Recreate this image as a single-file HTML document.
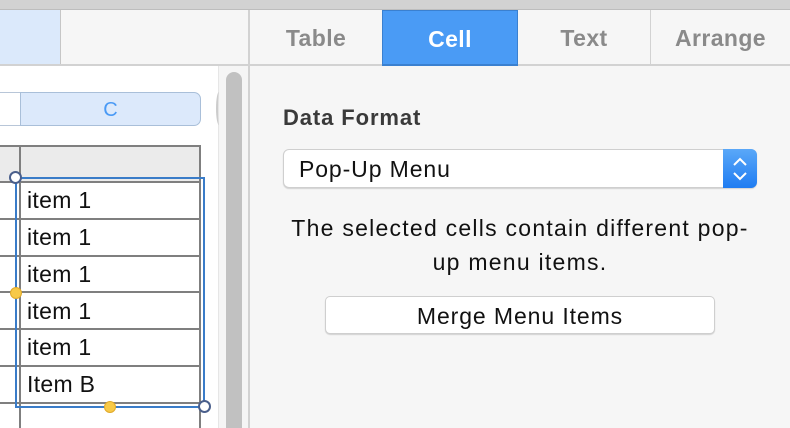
<!DOCTYPE html>
<html><head><style>
*{margin:0;padding:0;box-sizing:border-box}
body{width:790px;height:428px;overflow:hidden;position:relative;background:#fff;font-family:"Liberation Sans",Helvetica,Arial,sans-serif}
.a{position:absolute}
.tab{position:absolute;top:10px;height:54px;line-height:56px;text-align:center;font-size:23px;letter-spacing:0.4px;font-weight:bold;color:#8a8a8a}
.row{position:absolute;left:20px;width:180px;font-size:23px;letter-spacing:0.3px;color:#111;padding-left:7px}
</style></head><body>
<div class="a" style="left:0;top:0;width:790px;height:9px;background:#d2d2d2"></div>
<div class="a" style="left:0;top:9px;width:790px;height:1px;background:#bdbdbd"></div>
<div class="a" style="left:0;top:10px;width:249px;height:54px;background:#f6f6f6"></div>
<div class="a" style="left:0;top:10px;width:61px;height:54px;background:#dbe9fb;border-right:1px solid #c6c6c6"></div>
<div class="a" style="left:0;top:64px;width:790px;height:2px;background:#d2d2d2"></div>
<div class="a" style="left:248px;top:10px;width:2px;height:418px;background:#d2d2d2"></div>
<div class="a" style="left:250px;top:66px;width:540px;height:362px;background:#f6f6f6"></div>
<div class="a" style="left:250px;top:10px;width:540px;height:54px;background:#f6f6f6"></div>
<div class="tab" style="left:250px;width:132px">Table</div>
<div class="tab" style="left:382px;width:136px;background:#4a9bf5;color:#fff;border:1px solid #3a80d0;border-bottom:2px solid #3a80d0;height:56px">Cell</div>
<div class="tab" style="left:518px;width:133px;border-right:1px solid #d2d2d2">Text</div>
<div class="tab" style="left:651px;width:139px">Arrange</div>
<div class="a" style="left:283px;top:105px;font-size:22px;letter-spacing:0.9px;font-weight:bold;color:#3a3a3a">Data Format</div>
<div class="a" style="left:283px;top:149px;width:474px;height:39px;background:#fff;border:1px solid #cfcfcf;border-radius:6px;box-shadow:0 1px 1px rgba(0,0,0,.15)"></div>
<div class="a" style="left:299px;top:156px;font-size:23px;letter-spacing:0.9px;color:#111">Pop-Up Menu</div>
<div class="a" style="left:723px;top:149px;width:34px;height:39px;background:linear-gradient(#5aa8f8,#1f7cf2);border-radius:0 6px 6px 0"></div>
<svg class="a" style="left:730px;top:154px" width="20" height="30"><path d="M4 11 L10 5 L16 11 M4 19 L10 25 L16 19" stroke="#fff" stroke-width="2" fill="none"/></svg>
<div class="a" style="left:250px;top:211px;width:540px;text-align:center;font-size:23px;letter-spacing:1.25px;line-height:34px;color:#111">The selected cells contain different pop-<br>up menu items.</div>
<div class="a" style="left:325px;top:296px;width:390px;height:38px;background:#fff;border:1px solid #cfcfcf;border-radius:5px;box-shadow:0 1px 1px rgba(0,0,0,.15);text-align:center;line-height:38px;font-size:23px;letter-spacing:0.9px;color:#111">Merge Menu Items</div>
<div class="a" style="left:218px;top:66px;width:30px;height:362px;background:#f5f5f5;border-left:1px solid #e6e6e6"></div>
<div class="a" style="left:226px;top:72px;width:16px;height:356px;background:#c1c1c1;border-radius:8px 8px 0 0"></div>
<div class="a" style="left:216px;top:92px;width:6px;height:33px;border-radius:50%;border-left:2px solid #ccc"></div>
<div class="a" style="left:-10px;top:92px;width:31px;height:34px;background:#fff;border:1px solid #b8c6d8;border-right:none"></div>
<div class="a" style="left:20px;top:92px;width:181px;height:34px;background:#dce9fb;border:1px solid #a9bfd9;border-radius:0 7px 7px 0;text-align:center;line-height:34px;font-size:20px;color:#4a9af5">C</div>
<div class="a" style="left:0;top:146px;width:201px;height:36px;background:#ebebeb"></div>
<div class="a" style="left:0;top:145px;width:201px;height:2px;background:#7f7f7f"></div>
<div class="a" style="left:19px;top:145px;width:2px;height:283px;background:#7f7f7f"></div>
<div class="a" style="left:199px;top:145px;width:2px;height:283px;background:#7f7f7f"></div>
<div class="a" style="left:0;top:181px;width:201px;height:2px;background:#7f7f7f"></div>
<div class="a" style="left:0;top:218px;width:201px;height:2px;background:#7f7f7f"></div>
<div class="a" style="left:0;top:255px;width:201px;height:2px;background:#7f7f7f"></div>
<div class="a" style="left:0;top:291px;width:201px;height:2px;background:#7f7f7f"></div>
<div class="a" style="left:0;top:328px;width:201px;height:2px;background:#7f7f7f"></div>
<div class="a" style="left:0;top:365px;width:201px;height:2px;background:#7f7f7f"></div>
<div class="a" style="left:0;top:402px;width:201px;height:2px;background:#7f7f7f"></div>
<div class="row" style="top:187px">item 1</div>
<div class="row" style="top:224px">item 1</div>
<div class="row" style="top:261px">item 1</div>
<div class="row" style="top:298px">item 1</div>
<div class="row" style="top:334px">item 1</div>
<div class="row" style="top:371px">Item B</div>
<div class="a" style="left:15px;top:177px;width:190px;height:231px;border:2px solid #3a7cc8"></div>
<div class="a" style="left:9px;top:171px;width:13px;height:13px;border-radius:50%;background:#fff;border:2px solid #4a5f8c"></div>
<div class="a" style="left:198px;top:400px;width:13px;height:13px;border-radius:50%;background:#fff;border:2px solid #4a5f8c"></div>
<div class="a" style="left:10px;top:287px;width:12px;height:12px;border-radius:50%;background:#f7c948;border:1px solid #e0a92a"></div>
<div class="a" style="left:104px;top:401px;width:12px;height:12px;border-radius:50%;background:#f7c948;border:1px solid #e0a92a"></div>
</body></html>
